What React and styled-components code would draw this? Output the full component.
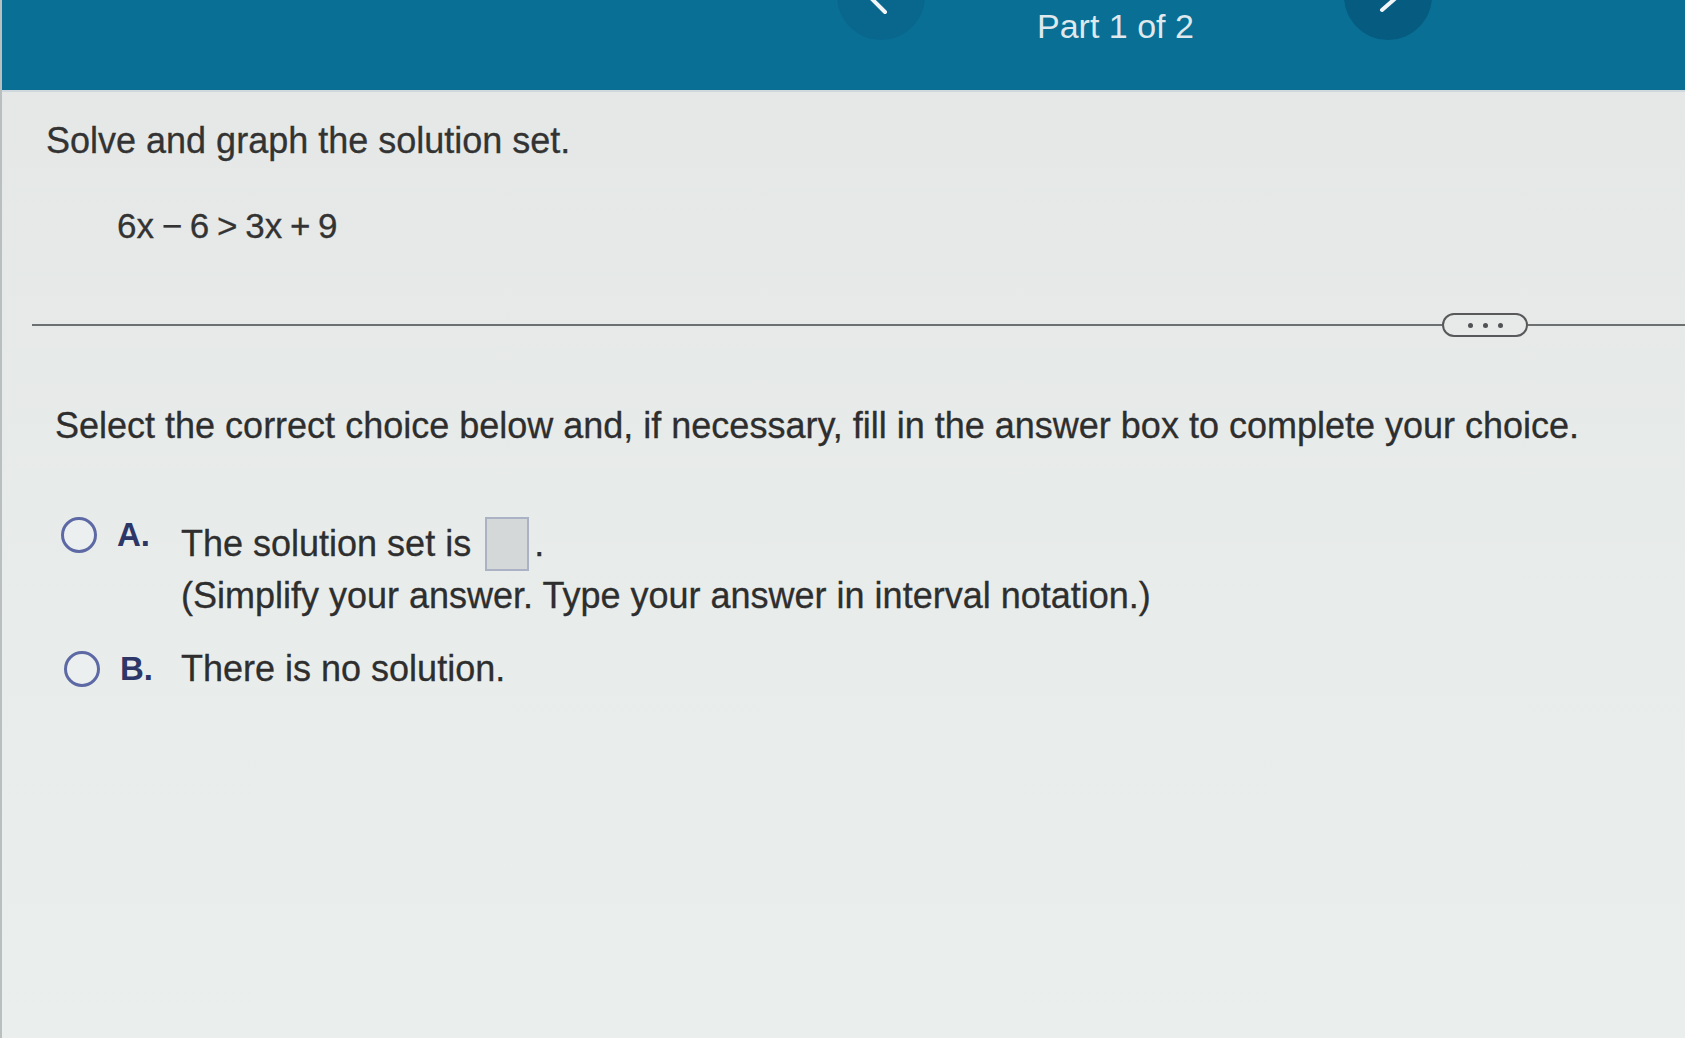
import React from "react";
import styled, { createGlobalStyle } from "styled-components";

const GlobalStyle = createGlobalStyle`
  html, body {
    margin: 0;
    padding: 0;
    background: #e7ebea;
    overflow: hidden;
  }
  body {
    font-family: "Liberation Sans", Arial, Helvetica, sans-serif;
    color: #2e2e2e;
  }
`;

const Page = styled.div`
  min-height: 100vh;
  background: linear-gradient(180deg, #e4e7e6 0%, #e8ecea 60%, #eaefed 100%);
  border-left: 2px solid #b9bebe;
  box-sizing: border-box;
`;

const Header = styled.header`
  height: 90px;
  background: #096f95;
  border-bottom: 2px solid #cfd8dc;
  display: flex;
  align-items: flex-start;
  padding-left: 835px;
  overflow: hidden;
`;

const NavButton = styled.div`
  flex: none;
  width: 88px;
  height: 88px;
  margin-top: -48px;
  margin-left: ${(p) => p.$offset || 0}px;
  border-radius: 50%;
  background: ${(p) => (p.$dark ? "#055b80" : "#09678d")};

  svg {
    display: block;
  }
`;

const PartTitle = styled.div`
  margin-top: 9px;
  margin-left: 112px;
  font-size: 34px;
  line-height: 34px;
  color: #dfe8ec;
  white-space: nowrap;
`;

const Main = styled.main`
  padding-top: 28px;
`;

const Heading = styled.h1`
  margin: 0;
  padding-left: 44px;
  font-size: 36px;
  line-height: 42px;
  font-weight: 400;
  color: #333;
  -webkit-text-stroke: 0.3px #333;
`;

const Equation = styled.div`
  margin-top: 43px;
  padding-left: 115px;
  font-size: 35px;
  line-height: 42px;
  word-spacing: -2px;
  color: #333;
  -webkit-text-stroke: 0.3px #333;
`;

const Divider = styled.div`
  margin-top: 66px;
  margin-left: 30px;
  display: flex;
  align-items: center;
`;

const Rule = styled.div`
  flex: ${(p) => (p.$width ? "none" : "1")};
  width: ${(p) => (p.$width ? `${p.$width}px` : "auto")};
  height: 2px;
  background: #6c7071;
`;

const MoreButton = styled.div`
  flex: none;
  width: 82px;
  height: 20px;
  border: 2.5px solid #57595b;
  border-radius: 13px;
  display: flex;
  align-items: center;
  justify-content: center;
  gap: 10px;
`;

const Dot = styled.span`
  width: 5px;
  height: 5px;
  border-radius: 50%;
  background: #505254;
`;

const Instruction = styled.p`
  margin: 68px 0 0;
  padding-left: 53px;
  font-size: 36px;
  line-height: 42px;
  color: #2e2e2e;
  -webkit-text-stroke: 0.3px #2e2e2e;
  white-space: nowrap;
`;

const Options = styled.div`
  margin-top: 70px;
  padding-left: 59px;
  display: flex;
  flex-direction: column;
  gap: 37px;
`;

const Option = styled.div`
  display: flex;
  align-items: flex-start;
`;

const Radio = styled.span`
  flex: none;
  width: 36px;
  height: 36px;
  margin-left: ${(p) => p.$shift || 0}px;
  box-sizing: border-box;
  border: 3px solid #5d69a5;
  border-radius: 50%;
  background: #eceff0;
`;

const Letter = styled.span`
  flex: none;
  width: ${(p) => 84 - (p.$shift || 0)}px;
  padding-left: 20px;
  box-sizing: border-box;
  font-size: 33px;
  line-height: 36px;
  font-weight: 700;
  color: #2c3667;
`;

const OptionBody = styled.div`
  display: flex;
  flex-direction: column;
`;

const AnswerLine = styled.div`
  display: flex;
  align-items: center;
`;

const OptionText = styled.span`
  font-size: 36px;
  line-height: 36px;
  color: #2e2e2e;
  -webkit-text-stroke: 0.3px #2e2e2e;
  white-space: nowrap;
`;

const HintText = styled(OptionText)`
  margin-top: 7px;
`;

const AnswerBox = styled.span`
  flex: none;
  width: 44px;
  height: 54px;
  margin: 0 5px 0 14px;
  box-sizing: border-box;
  border: 2px solid #aab2c4;
  background: #d5d8d8;
`;

function Chevron({ dir }) {
  const d = dir === "left" ? "M48 60 L34 46 L48 32" : "M38 58 L54 44 L38 30";
  return (
    <svg width="88" height="88" viewBox="0 0 88 88">
      <path d={d} fill="none" stroke="#f1f5f7" strokeWidth="4" strokeLinecap="round" strokeLinejoin="round" />
    </svg>
  );
}

export default function App() {
  return (
    <Page>
      <GlobalStyle />
      <Header>
        <NavButton>
          <Chevron dir="left" />
        </NavButton>
        <PartTitle>Part 1 of 2</PartTitle>
        <NavButton $dark $offset={150}>
          <Chevron dir="right" />
        </NavButton>
      </Header>

      <Main>
        <Heading>Solve and graph the solution set.</Heading>
        <Equation>6x − 6 &gt; 3x + 9</Equation>

        <Divider>
          <Rule />
          <MoreButton>
            <Dot />
            <Dot />
            <Dot />
          </MoreButton>
          <Rule $width={157} />
        </Divider>

        <Instruction>
          Select the correct choice below and, if necessary, fill in the answer box to complete your choice.
        </Instruction>

        <Options>
          <Option>
            <Radio />
            <Letter>A.</Letter>
            <OptionBody>
              <AnswerLine>
                <OptionText>The solution set is</OptionText>
                <AnswerBox />
                <OptionText>.</OptionText>
              </AnswerLine>
              <HintText>(Simplify your answer. Type your answer in interval notation.)</HintText>
            </OptionBody>
          </Option>
          <Option>
            <Radio $shift={3} />
            <Letter $shift={3}>B.</Letter>
            <OptionText>There is no solution.</OptionText>
          </Option>
        </Options>
      </Main>
    </Page>
  );
}
